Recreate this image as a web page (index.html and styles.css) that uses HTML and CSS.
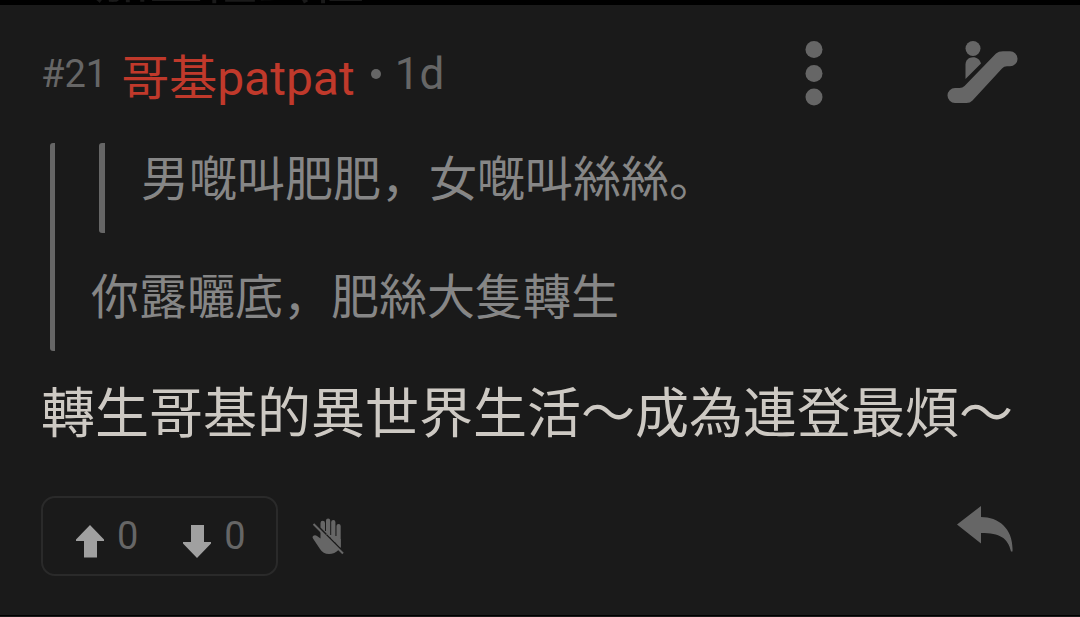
FILE: index.html
```html
<!DOCTYPE html>
<html lang="ja">
<head>
    <meta charset="utf-8">
    <meta name="viewport" content="width=device-width, initial-scale=1">
    <title>哥基patpat</title>
    <link rel="stylesheet" href="styles.css">
</head>
<body>
    <div class="previous">
        <span>「加主佐云任</span>
    </div>

    <article class="comment">
        <header class="comment-header">
            <span class="floor">#21</span>
            <a class="author" href="#">哥基patpat</a>
            <span class="dot"></span>
            <time class="time">1d</time>
            <div class="header-actions">
                <button class="icon-button" type="button" aria-label="更多">
                    <svg width="18" height="66" viewBox="0 0 18 66">
                        <circle cx="9" cy="8.5" r="8.5"/>
                        <circle cx="9" cy="32.5" r="8.5"/>
                        <circle cx="9" cy="56" r="8.5"/>
                    </svg>
                </button>
                <button class="icon-button" type="button" aria-label="扶手梯">
                    <svg width="72" height="64" viewBox="0 0 72 64">
                        <circle cx="26" cy="7.5" r="7.5"/>
                        <path d="M18.500 38V23.500C18.500 19 22 16.200 26 16.200C30 16.200 33 18.500 34 22.500Z"/>
                        <path d="M56 10.200H63A7.500 7.500 0 0 1 63 25.300H60Q57 25.300 55 27.500L25.500 59.500Q23 62 19.500 62H8A7.500 7.500 0 0 1 8 47H12.500Q15.500 47 17.500 45L49 12.500Q51.500 10.200 56 10.200Z"/>
                    </svg>
                </button>
            </div>
        </header>

        <blockquote class="quote">
            <blockquote class="quote quote-inner">
                <p>男嘅叫肥肥，女嘅叫絲絲。</p>
            </blockquote>
            <p>你露曬底，肥絲大隻轉生</p>
        </blockquote>

        <p class="message">轉生哥基的異世界生活～成為連登最煩～</p>

        <footer class="comment-footer">
            <div class="votes">
                <button class="vote" type="button" aria-label="正評 0">
                    <svg width="30" height="34" viewBox="0 0 30 34">
                        <path d="M15 1L29 15.500V17H22V33.500H9V17H1V15.500Z"/>
                    </svg>
                    <span>0</span>
                </button>
                <button class="vote" type="button" aria-label="負評 0">
                    <svg width="30" height="34" viewBox="0 0 30 34">
                        <path d="M15 34L29 19.500V18H22V1H9V18H1V19.500Z"/>
                    </svg>
                    <span>0</span>
                </button>
            </div>
            <button class="icon-button" type="button" aria-label="封鎖">
                <svg width="32" height="38" viewBox="0 0 32 38">
                    <path d="M8.500 10.500V6A2.200 2.200 0 0 1 13 6V15ZM14 16V3.500A2.100 2.100 0 0 1 18.200 3.500V20.200ZM19.200 21.200V5A2.100 2.100 0 0 1 23.400 5V25.400ZM24.500 26.500V9A2.100 2.100 0 0 1 28.700 9V28.500V30.700Z"/>
                    <path d="M13 15V14H14.500V18H23V19H25V22H28.700V30.700Z"/>
                    <path d="M1 19Q3 17.500 5 19L8.500 21.500V14L27 32.500Q22.500 37 17 37Q11 37 8 32L1 21.500Q0 20 1 19Z"/>
                    <path class="slash" d="M1.500 7L31 36.500"/>
                </svg>
            </button>
            <button class="icon-button reply" type="button" aria-label="回覆">
                <svg width="58" height="48" viewBox="0 0 58 48">
                    <path d="M1 19.500L25 1V12C43 12 57.500 24 56.500 46.500H55C52 33 44 28 25 28V38.500Z"/>
                </svg>
            </button>
        </footer>
    </article>
</body>
</html>
```

FILE: styles.css
```css
* {
    box-sizing: border-box;
}
body {
    margin: 0;
    background: #1a1a1a;
    color: #cdc9c3;
    font-family: Roboto, "Noto Sans CJK JP", sans-serif;
}
p, blockquote {
    margin: 0;
}
button {
    display: flex;
    padding: 0;
    border: none;
    background: none;
    color: inherit;
    font: inherit;
    cursor: pointer;
}
svg {
    display: block;
    fill: currentColor;
}

/* tail of the comment above */
.previous {
    display: flex;
    align-items: flex-end;
    height: 5px;
    padding: 0 41px;
    overflow: hidden;
    background: #000;
    color: #1a1a1a;
    font-size: 54px;
    line-height: 48px;
}

.comment {
    padding: 31px 41px 39px;
    border-bottom: 1px solid #000;
}

.comment-header {
    display: flex;
    align-items: center;
    height: 75px;
    color: #666;
}
.floor {
    margin-right: 14px;
    font-size: 38px;
}
.author {
    color: #c0392b;
    font-size: 48px;
    text-decoration: none;
}
.dot {
    width: 10px;
    height: 10px;
    margin: 0 14px 0 16px;
    border-radius: 50%;
    background: #666;
}
.time {
    font-size: 44px;
}
.header-actions {
    display: flex;
    gap: 124px;
    margin-left: auto;
    padding-right: 20px;
}
.icon-button {
    color: #666;
}

.quote {
    margin-top: 32px;
    margin-left: 9px;
    padding: 0 0 16px 36px;
    border-left: 5px solid #666;
    border-radius: 3px;
    color: #868686;
    font-size: 48px;
    line-height: 74px;
}
.quote > .quote-inner {
    margin: 0 0 28px 8px;
    border-left-width: 6px;
}

.message {
    margin-top: 24px;
    font-size: 54px;
    line-height: 80px;
}

.comment-footer {
    display: flex;
    align-items: center;
    margin-top: 41px;
}
.votes {
    display: flex;
    gap: 44px;
    height: 80px;
    margin-right: 34px;
    padding: 0 30px 0 32px;
    border: 2px solid #2a2a2a;
    border-radius: 14px;
}
.vote {
    align-items: center;
    gap: 12px;
    color: #666;
    font-size: 38px;
}
.vote svg {
    margin-top: 10px;
    color: #a0a0a0;
}
.slash {
    fill: none;
    stroke: currentColor;
    stroke-width: 2;
}
.reply {
    margin: 0 25px 14px auto;
}
```
